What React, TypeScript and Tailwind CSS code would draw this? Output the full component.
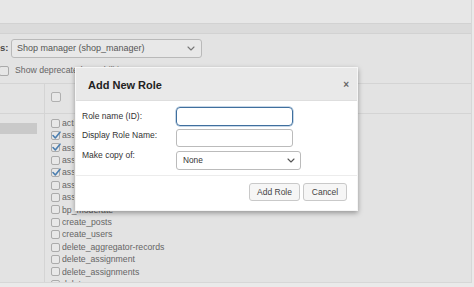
import React from "react";

function Box({ checked = false }: { checked?: boolean }) {
  return (
    <div className="w-[9px] h-[9px] shrink-0 rounded-[2px] border border-[#ababab] bg-[#e8e8e8] relative">
      {checked && (
        <svg className="absolute -left-[1px] -top-[2px]" width="11" height="11" viewBox="0 0 11 11">
          <path d="M2 5.5 L4.3 8 L9 2.2" fill="none" stroke="#4c7fb0" strokeWidth="1.6" strokeLinecap="round" strokeLinejoin="round" />
        </svg>
      )}
    </div>
  );
}

const items: { name: string; checked: boolean; hidden: boolean }[] = [
  { name: "activate_plugins", checked: false, hidden: true },
  { name: "assign_product_terms", checked: true, hidden: true },
  { name: "assign_shop_coupon_terms", checked: true, hidden: true },
  { name: "assign_shop_order_terms", checked: false, hidden: true },
  { name: "assign_shop_webhook_terms", checked: true, hidden: true },
  { name: "assign_course_terms", checked: false, hidden: true },
  { name: "assign_topic_tags", checked: false, hidden: true },
  { name: "bp_moderate", checked: false, hidden: false },
  { name: "create_posts", checked: false, hidden: false },
  { name: "create_users", checked: false, hidden: false },
  { name: "delete_aggregator-records", checked: false, hidden: false },
  { name: "delete_assignment", checked: false, hidden: false },
  { name: "delete_assignments", checked: false, hidden: false },
  { name: "delete_course", checked: false, hidden: false },
];

function Chevron({ color = "#666" }: { color?: string }) {
  return (
    <svg width="8" height="5" viewBox="0 0 8 5">
      <path d="M1 1 L4 4 L7 1" fill="none" stroke={color} strokeWidth="1.1" strokeLinecap="round" strokeLinejoin="round" />
    </svg>
  );
}

export default function App() {
  return (
    <div
      className="w-[474px] h-[287px] bg-[#eaeaea] overflow-hidden relative"
      style={{ fontFamily: '"Liberation Sans", Arial, sans-serif' }}
    >
      <div className="w-[472px] h-[283px] bg-[#e3e3e3] border-r border-b border-[#d7d7d7] flex flex-col overflow-hidden">
        <div className="h-[23px] shrink-0 bg-[#e7e7e7]" />
        <div className="h-[11px] shrink-0 bg-[#dbdbdb] border-y border-[#d2d2d2]" />
        <div className="flex items-center h-[19px] mt-[5px] shrink-0">
          <span className="text-[9.5px] font-bold text-[#4a4a4a] w-[11px]">s:</span>
          <div className="w-[191px] h-[19px] rounded-[3px] border border-[#b9b9b9] bg-[#e8e8e8] flex items-center justify-between pl-[5px] pr-[6px]">
            <span className="text-[9px] text-[#555] whitespace-nowrap">Shop manager (shop_manager)</span>
            <Chevron color="#777" />
          </div>
        </div>
        <div className="flex items-center h-[10px] mt-[8px] shrink-0 -ml-[1px]">
          <div className="w-[10px] h-[10px] rounded-[2px] border border-[#aaaaaa] bg-[#e6e6e6]" />
          <span className="ml-[6px] text-[8.7px] text-[#666] whitespace-nowrap">Show deprecated capabilities</span>
        </div>
        <div className="mt-[7px] border-t border-[#d4d4d4] flex-1 flex">
          <div className="w-[45px] border-r border-[#d4d4d4] flex flex-col">
            <div className="h-[30px] border-b border-[#d4d4d4]" />
            <div className="mt-[9px] h-[11px] w-[37px] bg-[#c9c9c9]" />
          </div>
          <div className="flex-1 flex flex-col">
            <div className="h-[30px] border-b border-[#d4d4d4] pl-[6px] pt-[8px]">
              <div className="w-[10px] h-[10px] rounded-[2px] border border-[#b0b0b0] bg-[#e8e8e8]" />
            </div>
            <div className="pt-[3px] pl-[6px] flex flex-col">
              {items.map((it) => (
                <div key={it.name} className="h-[12.4px] flex items-center gap-[2px]">
                  <Box checked={it.checked} />
                  {it.hidden ? (
                    <span className="w-[12px] overflow-hidden text-[8.7px] text-[#666] whitespace-nowrap leading-none">{it.name}</span>
                  ) : (
                    <span className="text-[8.7px] text-[#666] whitespace-nowrap leading-none">{it.name}</span>
                  )}
                </div>
              ))}
            </div>
          </div>
        </div>
      </div>

      <div className="absolute left-[75px] top-[67px] w-[283px] bg-white border border-[#f6f6f6] shadow-[0_2px_5px_rgba(0,0,0,0.35)] flex flex-col">
        <div className="h-[33px] bg-[#e9e9e9] border-b border-[#dedede] flex items-center justify-between pl-[12px] pr-[8px]">
          <span className="text-[11px] font-bold text-[#222] pt-[2px]">Add New Role</span>
          <span className="text-[10px] font-bold text-[#666] leading-none pt-[1px]">×</span>
        </div>
        <div className="pt-[6px] pl-[6px] flex flex-col gap-[3px]">
          <div className="flex items-center">
            <span className="w-[94px] text-[8.5px] leading-[12px] text-[#333] whitespace-nowrap -mt-[1px]">Role name (ID):</span>
            <div className="w-[117px] h-[19px] rounded-[4px] border-[1.5px] border-[#3f6f9e] shadow-[0_0_0_0.5px_#8fb0cf]" />
          </div>
          <div className="flex items-start">
            <span className="w-[94px] text-[8.5px] leading-[12px] text-[#333] whitespace-nowrap mt-[0px]">Display Role Name:</span>
            <div className="w-[117px] h-[18px] rounded-[3px] border border-[#bbbbbb]" />
          </div>
          <div className="flex items-start mt-[1px]">
            <span className="w-[94px] text-[8.5px] leading-[12px] text-[#333] whitespace-nowrap -mt-[2px]">Make copy of:</span>
            <div className="w-[125px] h-[19px] rounded-[3px] border border-[#bbbbbb] flex items-center justify-between pl-[6px] pr-[5px]">
              <span className="text-[8.3px] text-[#333]">None</span>
              <Chevron color="#555" />
            </div>
          </div>
        </div>
        <div className="mt-[5px] border-t border-[#ececec]" />
        <div className="flex justify-end gap-[3px] pr-[10px] pt-[7px] pb-[9px]">
          <div className="w-[51px] h-[18px] rounded-[3px] border border-[#c9c9c9] bg-[#f6f6f6] flex items-center justify-center text-[8.5px] text-[#444]">
            Add Role
          </div>
          <div className="w-[44px] h-[18px] rounded-[3px] border border-[#c9c9c9] bg-[#f6f6f6] flex items-center justify-center text-[8.5px] text-[#444]">
            Cancel
          </div>
        </div>
      </div>
    </div>
  );
}
